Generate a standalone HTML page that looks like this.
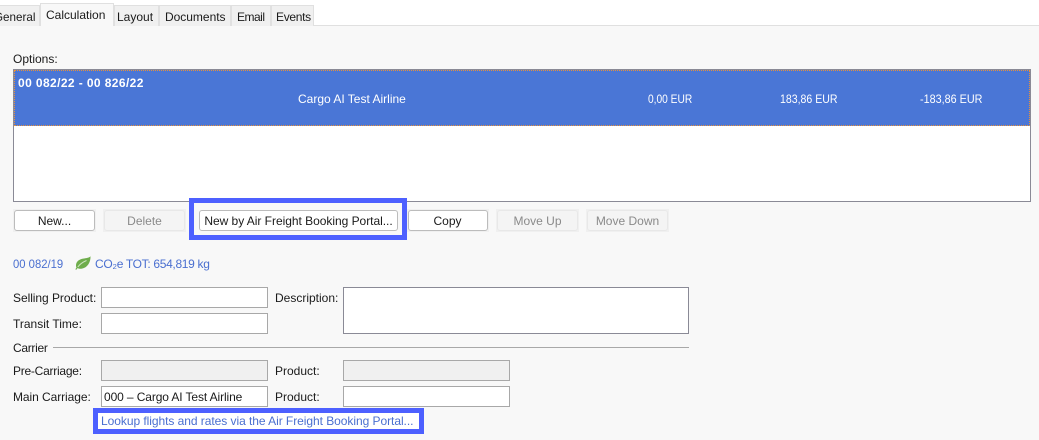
<!DOCTYPE html>
<html><head><meta charset="utf-8"><style>
html,body{margin:0;padding:0}
body{width:1039px;height:440px;overflow:hidden;background:#f8f8f8;position:relative;font:12px "Liberation Sans",sans-serif;color:#1a1a1a}
.a{position:absolute;box-sizing:border-box}
.t{position:absolute;white-space:nowrap;line-height:14px;height:14px}
.sx{transform-origin:0 50%}
.tab{position:absolute;box-sizing:border-box;top:5px;height:21px;background:#f0f0f0;border:1px solid #e0e0e0;border-bottom:none;text-align:center;line-height:22px;white-space:nowrap}
.strip{position:absolute;background:#f0f0f0;top:209px;height:23px}
.btn{position:absolute;box-sizing:border-box;top:210px;height:21px;background:#fff;border:1px solid #bcbcbc;border-radius:3px;text-align:center;line-height:20px;white-space:nowrap}
.btn.d{background:#f4f4f4;border-color:#e8e8e8;color:#8a8a8a}
.in{position:absolute;box-sizing:border-box;height:21px;background:#fff;border:1px solid #a8a8a8}
.in.g{background:#f0f0f0}
.blue{color:#4a6fd0}
</style></head><body>
<div class="a" style="left:0;top:0;width:1039px;height:25px;background:#fff"></div>
<div class="a" style="left:0;top:25px;width:1039px;height:1px;background:#e0e0e0"></div>
<div class="tab" style="left:-10px;width:50px"></div>
<div class="t sx" style="left:-6px;top:10px;transform:scaleX(.97)">General</div>
<div class="tab" style="left:114px;width:45px"></div>
<div class="t" style="left:117px;top:10px">Layout</div>
<div class="tab" style="left:159px;width:72px"></div>
<div class="t" style="left:165px;top:10px;letter-spacing:-.02px">Documents</div>
<div class="tab" style="left:231px;width:40px"></div>
<div class="t" style="left:237px;top:10px;letter-spacing:-.5px">Email</div>
<div class="tab" style="left:271px;width:43px"></div>
<div class="t" style="left:276px;top:10px;letter-spacing:-.3px">Events</div>
<div class="tab" style="left:40px;top:3px;height:23px;width:74px;background:#f8f8f8;line-height:22px"></div>
<div class="t" style="left:46px;top:8px">Calculation</div>

<div class="t" style="left:13px;top:52px">Options:</div>
<div class="a" style="left:13px;top:69px;width:1018px;height:133px;background:#fff;border:1px solid #8a8a96"></div>
<div class="a" style="left:14px;top:70px;width:1016px;height:56px;background:#4a76d6;border:1px dotted #e8913a"></div>
<div class="t" style="left:18px;top:76px;color:#fff;font-weight:bold;letter-spacing:.4px">00 082/22 - 00 826/22</div>
<div class="t" style="left:298px;top:92px;color:#fff">Cargo AI Test Airline</div>
<div class="t sx" style="left:648px;top:92px;color:#fff;transform:scaleX(.85)">0,00 EUR</div>
<div class="t sx" style="left:780px;top:92px;color:#fff;transform:scaleX(.88)">183,86 EUR</div>
<div class="t sx" style="left:920px;top:92px;color:#fff;transform:scaleX(.9)">-183,86 EUR</div>

<div class="strip" style="left:13px;width:83px"></div>
<div class="strip" style="left:103px;width:83px"></div>
<div class="strip" style="left:407px;width:82px"></div>
<div class="strip" style="left:496px;width:83px"></div>
<div class="strip" style="left:586px;width:83px"></div>
<div class="btn" style="left:14px;width:81px">New...</div>
<div class="btn d" style="left:104px;width:81px">Delete</div>
<div class="a" style="left:189px;top:198px;width:218px;height:42px;border:5px solid #4d60ff"></div>
<div class="btn" style="left:199px;width:199px;letter-spacing:-.03px">New by Air Freight Booking Portal...</div>
<div class="btn" style="left:408px;width:80px;padding-right:1px">Copy</div>
<div class="btn d" style="left:497px;width:81px">Move Up</div>
<div class="btn d" style="left:587px;width:81px">Move Down</div>

<div class="t blue sx" style="left:13px;top:257px;transform:scaleX(.94)">00 082/19</div>
<svg class="a" style="left:74px;top:255px" width="18" height="16" viewBox="0 0 18 16"><path d="M16.5 1.2C15 3 12 3 9 3.6C4.5 4.5 1.8 7 2 11C2.1 11.9 2.3 12.3 2.5 12.6C2 13.2 1.6 13.8 1.3 14.4L2.4 14.8C2.7 14.2 3.1 13.6 3.6 13.1C4.6 13.7 6.2 14 8 13.6C13.5 12.5 16.8 7 16.5 1.2Z" fill="#6fad4c"/><path d="M3.8 12C6 9 9 7 12.5 5.5" stroke="#cfe5c2" stroke-width="1" fill="none"/></svg>
<div class="t blue" style="left:95px;top:257px;letter-spacing:-.32px">CO₂e TOT: 654,819 kg</div>

<div class="t" style="left:13px;top:291px;letter-spacing:-.05px">Selling Product:</div>
<div class="in" style="left:101px;top:287px;width:167px"></div>
<div class="t" style="left:275px;top:291px">Description:</div>
<div class="in" style="left:343px;top:287px;width:346px;height:47px;border-color:#8a8a96"></div>
<div class="t" style="left:13px;top:317px">Transit Time:</div>
<div class="in" style="left:101px;top:313px;width:167px"></div>
<div class="t" style="left:13px;top:341px;letter-spacing:-.3px">Carrier</div>
<div class="a" style="left:53px;top:347px;width:636px;height:1px;background:#a8a8a8"></div>
<div class="t" style="left:13px;top:364px;letter-spacing:-.25px">Pre-Carriage:</div>
<div class="in g" style="left:101px;top:360px;width:167px"></div>
<div class="t" style="left:275px;top:364px">Product:</div>
<div class="in g" style="left:343px;top:360px;width:167px"></div>
<div class="t" style="left:13px;top:390px;letter-spacing:-.07px">Main Carriage:</div>
<div class="in" style="left:101px;top:386px;width:167px"></div>
<div class="t" style="left:104px;top:390px;letter-spacing:-.11px">000 – Cargo AI Test Airline</div>
<div class="t" style="left:275px;top:390px">Product:</div>
<div class="in" style="left:343px;top:386px;width:167px"></div>
<div class="a" style="left:93px;top:408px;width:331px;height:26px;background:#fff;border:5px solid #4d60ff"></div>
<div class="t blue" style="left:101px;top:414px;letter-spacing:-.05px">Lookup flights and rates via the Air Freight Booking Portal...</div>
</body></html>
